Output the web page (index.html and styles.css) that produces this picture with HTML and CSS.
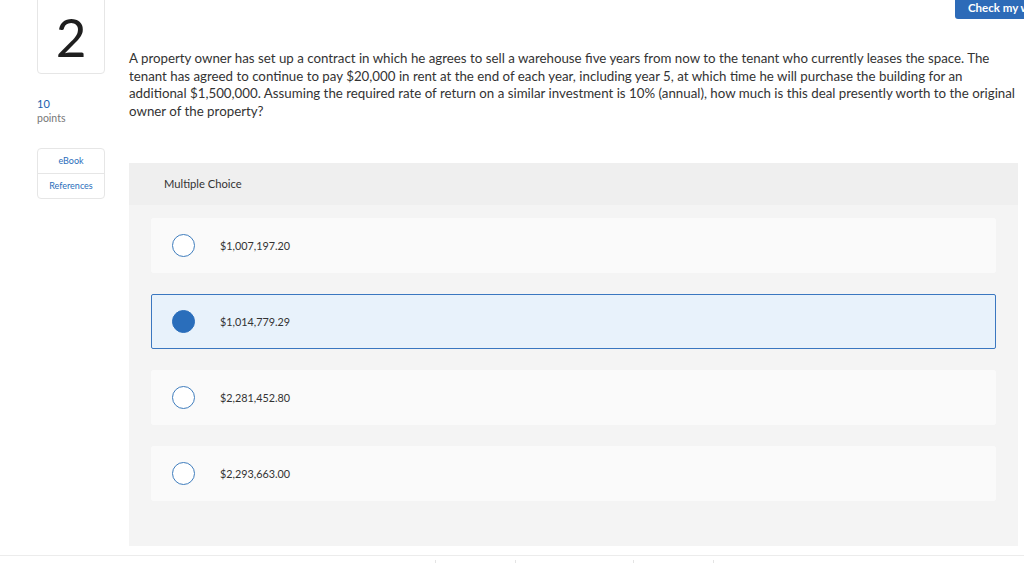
FILE: index.html
```html
<!DOCTYPE html>
<html>
<head>
<meta charset="utf-8">
<link rel="stylesheet" href="styles.css">
</head>
<body>
<button class="check-btn">Check my work</button>
<div class="page">
  <aside class="sidebar">
    <div class="qnum">2</div>
    <div class="points">
      <div class="pts-val">10</div>
      <div class="pts-label">points</div>
    </div>
    <div class="refs">
      <div class="ref-item">eBook</div>
      <div class="ref-item">References</div>
    </div>
  </aside>
  <main class="main">
    <p class="question">A property owner has set up a contract in which he agrees to sell a warehouse five years from now to the tenant who currently leases the space. The tenant has agreed to continue to pay $20,000 in rent at the end of each year, including year 5, at which time he will purchase the building for an additional $1,500,000. Assuming the required rate of return on a similar investment is 10% (annual), how much is this deal presently worth to the original owner of the property?</p>
    <section class="panel">
      <div class="panel-head">Multiple Choice</div>
      <div class="options">
        <div class="option"><span class="radio"></span><span class="opt-text">$1,007,197.20</span></div>
        <div class="option selected"><span class="radio"></span><span class="opt-text">$1,014,779.29</span></div>
        <div class="option"><span class="radio"></span><span class="opt-text">$2,281,452.80</span></div>
        <div class="option"><span class="radio"></span><span class="opt-text">$2,293,663.00</span></div>
      </div>
    </section>
  </main>
</div>
<footer class="footer">
  <span class="tick t1"></span><span class="tick t2"></span><span class="tick t3"></span><span class="tick t4"></span>
</footer>
</body>
</html>
```
FILE: styles.css
```css
html, body {
  margin: 0;
  padding: 0;
  background: #ffffff;
  font-family: Lato, "Open Sans", "Liberation Sans", sans-serif;
  color: #333333;
  overflow: hidden;
  height: 563px;
}

.check-btn {
  position: absolute;
  top: 0;
  left: 955px;
  height: 19px;
  width: 110px;
  padding: 0 0 4px 13px;
  border: none;
  border-radius: 0 0 0 3px;
  background: #2d6bb8;
  color: #ffffff;
  font-family: Lato, "Liberation Sans", sans-serif;
  font-weight: 700;
  font-size: 11.5px;
  line-height: 14px;
  text-align: left;
  white-space: nowrap;
}

.page {
  display: flex;
  align-items: flex-start;
}

.sidebar {
  width: 68px;
  margin-left: 37px;
  margin-right: 24px;
  display: flex;
  flex-direction: column;
}

.qnum {
  margin-top: -6px;
  height: 80px;
  border: 1px solid #e6e6e6;
  border-radius: 4px;
  box-sizing: border-box;
  display: flex;
  align-items: center;
  justify-content: center;
  padding-top: 4px;
  font-size: 53px;
  font-weight: 400;
  color: #1f1f1f;
}

.points {
  margin-top: 22px;
  line-height: 15px;
}

.pts-val {
  font-size: 11px;
  color: #1b5fae;
}

.pts-label {
  font-size: 10.5px;
  color: #777777;
}

.refs {
  margin-top: 22px;
  border: 1px solid #e6e6e6;
  border-radius: 4px;
}

.ref-item {
  height: 24px;
  line-height: 24px;
  text-align: center;
  font-size: 9px;
  color: #2a6ebb;
}

.ref-item + .ref-item {
  border-top: 1px solid #e6e6e6;
}

.main {
  flex: 1;
  margin-right: 6px;
}

.question {
  margin: 50px 0 0 0;
  font-size: 13.3px;
  line-height: 17.7px;
  color: #333333;
}

.panel {
  margin-top: 42px;
  background: #f4f4f4;
  padding-bottom: 45px;
}

.panel-head {
  height: 42px;
  line-height: 42px;
  background: #efefef;
  padding-left: 35px;
  font-size: 11.2px;
  color: #333333;
}

.options {
  padding: 13px 22px 0 22px;
  display: flex;
  flex-direction: column;
  gap: 21px;
}

.option {
  height: 55px;
  box-sizing: border-box;
  background: #fafafa;
  border: 1px solid #fafafa;
  border-radius: 2px;
  display: flex;
  align-items: center;
  padding-left: 20px;
  gap: 25px;
}

.option.selected {
  background: #e8f2fb;
  border-color: #3a77c0;
}

.radio {
  width: 21px;
  height: 21px;
  border: 1px solid #3f7dbd;
  border-radius: 50%;
  background: #ffffff;
  flex: none;
}

.option.selected .radio {
  background: #2a6ebb;
  border-color: #2a6ebb;
}

.opt-text {
  font-size: 10.8px;
  color: #333333;
}

.footer {
  margin-top: 9px;
  border-top: 1px solid #ececec;
  height: 10px;
  position: relative;
}

.tick {
  position: absolute;
  top: 4px;
  width: 1px;
  height: 6px;
  background: #e4e4e4;
}
.t1 { left: 435px; }
.t2 { left: 515px; }
.t3 { left: 633px; }
.t4 { left: 713px; }
```
